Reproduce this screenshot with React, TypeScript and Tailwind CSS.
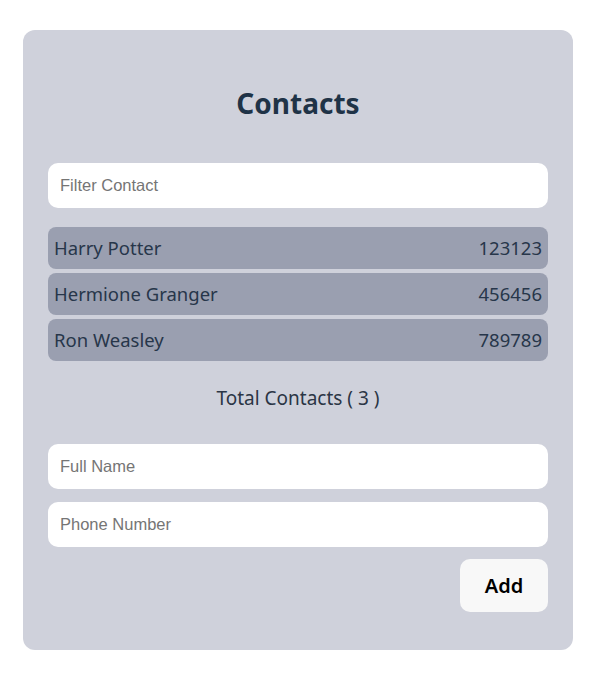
import React, { useState } from "react";

const contacts = [
  { name: "Harry Potter", phone: "123123" },
  { name: "Hermione Granger", phone: "456456" },
  { name: "Ron Weasley", phone: "789789" },
];

export default function App() {
  const [filter, setFilter] = useState("");
  const [name, setName] = useState("");
  const [phone, setPhone] = useState("");
  const shown = contacts.filter((c) => c.name.toLowerCase().includes(filter.toLowerCase()));
  return (
    <div className="min-h-[679px] w-[598px] bg-white pt-[30px] pl-[23px] font-['Noto_Sans',sans-serif]">
      <div className="flex h-[620px] w-[550px] flex-col rounded-[12px] bg-[#cfd1db] px-[25px]">
        <h1 className="mt-[55px] text-center text-[28px] font-bold leading-[36px] text-[#1f3347]">Contacts</h1>
        <input
          value={filter}
          onChange={(e) => setFilter(e.target.value)}
          placeholder="Filter Contact"
          className="mt-[42px] h-[45px] w-full rounded-[10px] bg-white px-3 font-['Liberation_Sans',sans-serif] text-[16.5px] text-[#333] outline-none placeholder:text-[#757575]"
        />
        <div className="mt-[19px] flex flex-col gap-[4px]">
          {shown.map((c) => (
            <div
              key={c.name}
              className="flex h-[42px] items-center justify-between rounded-[8px] bg-[#9a9fb0] px-[6px] text-[18.5px] text-[#27364a]"
            >
              <span>{c.name}</span>
              <span>{c.phone}</span>
            </div>
          ))}
        </div>
        <p className="mt-[23px] text-center text-[19px] leading-[28px] text-[#2b3545]">
          Total Contacts ( {shown.length} )
        </p>
        <input
          value={name}
          onChange={(e) => setName(e.target.value)}
          placeholder="Full Name"
          className="mt-[32px] h-[45px] w-full rounded-[10px] bg-white px-3 font-['Liberation_Sans',sans-serif] text-[16.5px] text-[#333] outline-none placeholder:text-[#757575]"
        />
        <input
          value={phone}
          onChange={(e) => setPhone(e.target.value)}
          placeholder="Phone Number"
          className="mt-[13px] h-[45px] w-full rounded-[10px] bg-white px-3 font-['Liberation_Sans',sans-serif] text-[16.5px] text-[#333] outline-none placeholder:text-[#757575]"
        />
        <div className="mt-[12px] flex justify-end">
          <button className="h-[53px] w-[88px] rounded-[10px] bg-[#f8f8f8] text-[20px] font-semibold text-black">
            Add
          </button>
        </div>
      </div>
    </div>
  );
}
